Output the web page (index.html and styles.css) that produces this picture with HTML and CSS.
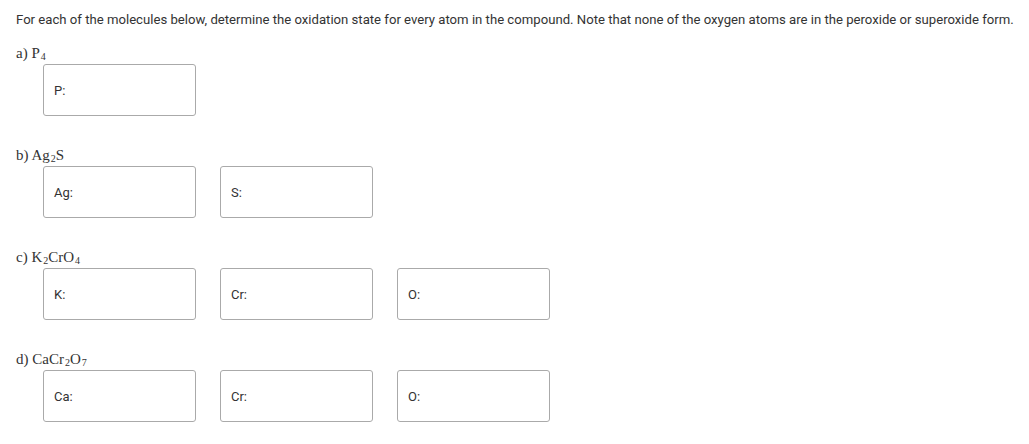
FILE: index.html
```html
<!DOCTYPE html>
<html>
<head>
<meta charset="utf-8">
<link rel="stylesheet" href="styles.css">
</head>
<body>
<div class="page">
  <p class="intro">For each of the molecules below, determine the oxidation state for every atom in the compound. Note that none of the oxygen atoms are in the peroxide or superoxide form.</p>

  <div class="problem">
    <div class="label">a) P<sub>4</sub></div>
    <div class="boxes">
      <div class="box">P:</div>
    </div>
  </div>

  <div class="problem">
    <div class="label">b) Ag<sub>2</sub>S</div>
    <div class="boxes">
      <div class="box">Ag:</div>
      <div class="box">S:</div>
    </div>
  </div>

  <div class="problem">
    <div class="label">c) K<sub>2</sub>CrO<sub>4</sub></div>
    <div class="boxes">
      <div class="box">K:</div>
      <div class="box">Cr:</div>
      <div class="box">O:</div>
    </div>
  </div>

  <div class="problem">
    <div class="label">d) CaCr<sub>2</sub>O<sub>7</sub></div>
    <div class="boxes">
      <div class="box">Ca:</div>
      <div class="box">Cr:</div>
      <div class="box">O:</div>
    </div>
  </div>
</div>
</body>
</html>
```
FILE: styles.css
```css
html, body {
  margin: 0;
  padding: 0;
  background: #fff;
}
.page {
  padding: 12px 16px 0 16px;
  font-family: Roboto, "Liberation Sans", sans-serif;
  color: #333;
}
.intro {
  margin: 0;
  font-size: 13.15px;
  line-height: 15px;
  white-space: nowrap;
}
.problem {
  display: flex;
  flex-direction: column;
  gap: 2px;
  margin-top: 30px;
}
.intro + .problem {
  margin-top: 17px;
}
.label {
  font-family: "Liberation Serif", "DejaVu Serif", serif;
  font-size: 15px;
  line-height: 18px;
  color: #333;
}
.label sub {
  font-size: 10px;
  vertical-align: -2px;
  line-height: 0;
  margin-left: 1px;
}
.boxes {
  display: flex;
  gap: 24px;
  padding-left: 27px;
}
.box {
  box-sizing: border-box;
  width: 153px;
  height: 52px;
  border: 1px solid #aaa;
  border-radius: 3px;
  padding: 0 10px;
  display: flex;
  align-items: center;
  font-size: 13px;
  color: #333;
}
```
